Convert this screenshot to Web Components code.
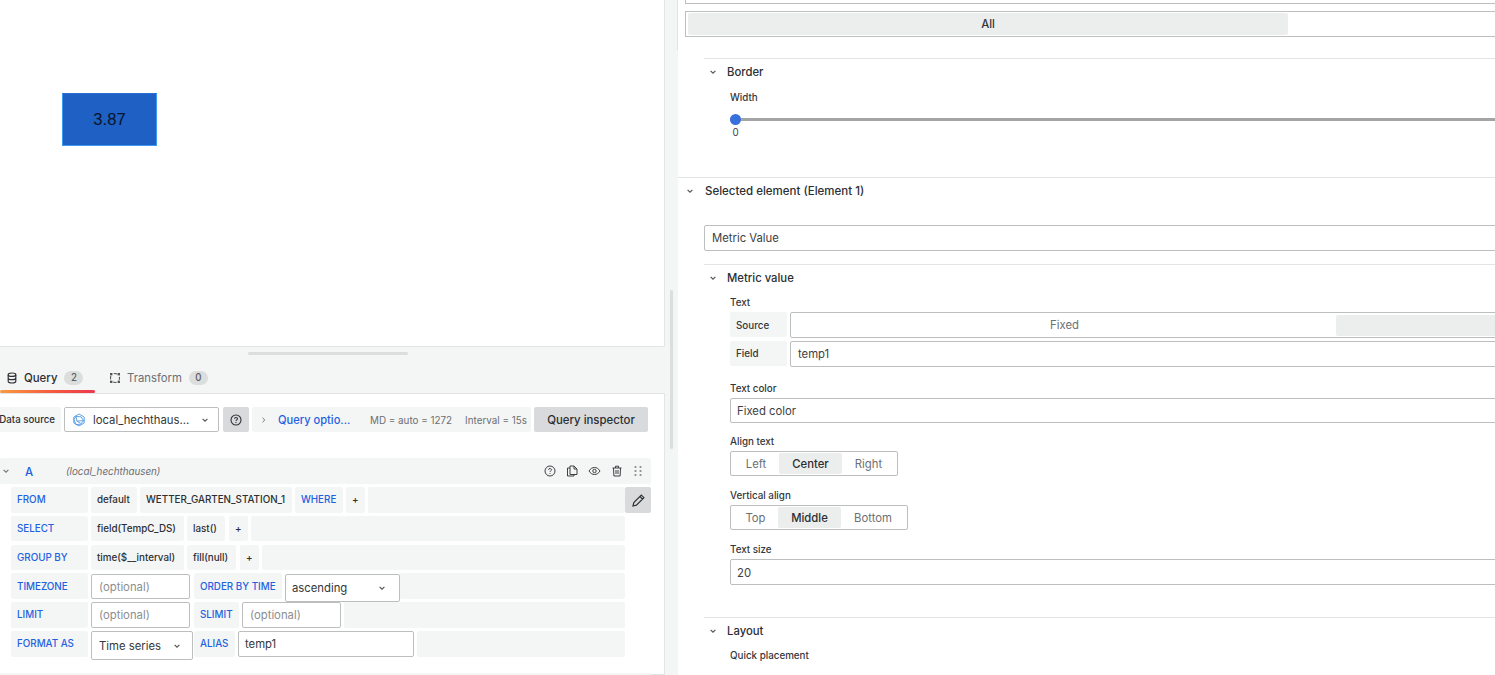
<!DOCTYPE html>
<html><head><meta charset="utf-8">
<style>
html,body{margin:0;height:100%;overflow:hidden;background:#fff;font-family:Inter,"Liberation Sans",sans-serif;color:#24292e}
</style></head><body>
<app-root></app-root>
<script>
function def(name,css,html){
  customElements.define(name,class extends HTMLElement{
    constructor(){super();const s=this.attachShadow({mode:'open'});
      s.innerHTML='<style>'+css+'</style>'+html;}
  });
}
const chev='<svg width="12" height="12" viewBox="0 0 12 12" fill="none" stroke="currentColor" stroke-width="1.2"><path d="M3.6 4.9 6 7.2l2.4-2.3"/></svg>';

def('q-tag',`:host{display:flex;align-items:center;height:var(--h,25px);background:#f4f5f5;border-radius:2px;font-size:9.8px;font-weight:500;color:#2b2f33;padding:0 6px var(--pb,0);white-space:nowrap;box-sizing:border-box;flex:none}
:host([kw]){color:#1f62e0}`,'<slot></slot>');
def('q-fill',`:host{display:block;flex:1;height:var(--h,25px);background:#f4f5f5;border-radius:2px}`,'');
def('q-input',`:host{display:flex;align-items:center;box-sizing:border-box;height:26px;border:1px solid #bdbebf;border-radius:2px;background:#fff;font-size:11.3px;color:#33373b;padding:0 6px;white-space:nowrap;flex:none;justify-content:space-between}
:host([ph]){color:#8b8e91;padding:0 7px}`,`<slot></slot>`);
def('q-row',`:host{display:flex;gap:3px;align-items:flex-start;height:29px}`,'<slot></slot>');

def('ico-help',`:host{display:inline-flex}`,'<svg width="12" height="12" viewBox="0 0 12 12" fill="none" stroke="#2f3236" stroke-width="1.1"><circle cx="6" cy="6" r="5"/><path d="M4.5 4.8C4.6 3.9 5.2 3.5 6 3.5c.9 0 1.5.5 1.5 1.3 0 1.1-1.5 1.1-1.5 2.1"/><path d="M6 8.1v.8"/></svg>');

def('query-editor',`:host{display:block;margin:0 13px 0 0;background:#fff;border:1px solid #e3e4e4;border-left:0;padding:13px 0 0 0;height:100%;box-sizing:border-box;font-size:11px}
.top{display:flex;gap:3px;height:25px;align-items:stretch;padding-right:16px}
.lab{background:#f4f5f5;display:flex;align-items:center;justify-content:flex-end;padding-right:6px;box-sizing:border-box;font-size:9.7px;font-weight:500;color:#2b2f33;width:61px;border-radius:0 2px 2px 0;flex:none;white-space:nowrap;overflow:hidden}
.ds{width:155px;box-sizing:border-box;border:1px solid #bdbebf;border-radius:2px;display:flex;align-items:center;font-size:11.3px;color:#33373b;padding:0 7px 0 7px;flex:none}
.ds span{flex:1;margin-left:7px;white-space:nowrap}
.hb{width:26px;background:#d9dadb;border-radius:2px;display:flex;align-items:center;justify-content:center;flex:none;margin-left:1px}
.opt{flex:1;background:#f4f5f5;display:flex;align-items:center;padding:0 4px 0 8px;border-radius:2px;white-space:nowrap}
.opt b{font-weight:500;font-size:11.1px;color:#1f62e0;margin-left:10px;width:92px;flex:none}
.opt i{font-style:normal;font-size:9.85px;color:#6c6f73;margin-right:13px}
.opt i:last-child{margin-right:0}
.insp{width:114px;flex:none;background:#d9dadb;border-radius:2px;font-weight:500;font-size:11.4px;color:#2b2f33;display:flex;align-items:center;justify-content:center}
.hd{margin-top:26px;height:26px;background:#f4f5f5;display:flex;align-items:center;margin-right:13px;border-radius:2px;color:#666}
.hd .c{width:25px;display:flex}
.hd .a{font-weight:500;font-size:11.5px;color:#1f62e0;width:41px;margin-top:1px}
.hd .n{font-style:italic;font-size:9.8px;color:#6c6f73;flex:1}
.hd svg.i{margin-right:10px}
.rows{margin:3px 0 0 11px;display:block;position:relative}
.pen{position:absolute;left:614px;top:0;width:26px;height:26px;background:#d9dadb;border-radius:2px;display:flex;align-items:center;justify-content:center}
.next{margin-top:13px;height:6px;background:#f4f5f5;margin-right:13px}
`,`
<div class="top">
 <div class="lab">Data source</div>
 <div class="ds"><svg width="14" height="14" viewBox="0 0 14 14" fill="none" stroke="#4f97e3" stroke-width=".9"><path d="M7 1l5.200 3v6L7 13l-5.200-3V4z"/><path d="M4 3.500l5 .3 2.700 3.800-3 3.600-4.700.4L2 6.500zM4 3.500l.9 4.600 3.800 2.300M4.900 8.100l6.800-.5"/></svg><span>local_hechthaus...</span>${chev.replace('<svg','<svg style="color:#555"')}</div>
 <div class="hb"><ico-help></ico-help></div>
 <div class="opt"><svg width="8" height="10" viewBox="0 0 8 10" fill="none" stroke="#777" stroke-width="1"><path d="M2.500 2.800 4.800 5 2.500 7.200"/></svg><b>Query optio...</b><i>MD = auto = 1272</i><i>Interval = 15s</i></div>
 <div class="insp">Query inspector</div>
</div>
<div class="hd"><span class="c">${chev.replace('<svg','<svg style="color:#777"')}</span><span class="a">A</span><span class="n">(local_hechthausen)</span>
 <svg class="i" width="12" height="12" viewBox="0 0 12 12" fill="none" stroke="#3d4044" stroke-width="1"><circle cx="6" cy="6" r="5"/><path d="M4.500 4.800C4.600 3.900 5.200 3.500 6 3.500c.9 0 1.500.5 1.500 1.300 0 1.100-1.500 1.100-1.500 2.100M6 8.100v.8"/></svg>
 <svg class="i" width="12" height="12" viewBox="0 0 12 12" fill="none" stroke="#3d4044" stroke-width="1"><path d="M4 1h4l3 3v5.500H4zM8 1v3h3"/><path d="M4 3H1.500v8H8V9.500" /></svg>
 <svg class="i" width="13" height="12" viewBox="0 0 13 12" fill="none" stroke="#3d4044" stroke-width="1"><path d="M1 6c1.500-2.400 3.300-3.500 5.500-3.500S10.500 3.600 12 6c-1.500 2.400-3.300 3.500-5.500 3.500S2.500 8.400 1 6z"/><circle cx="6.500" cy="6" r="1.700"/></svg>
 <svg class="i" width="12" height="12" viewBox="0 0 12 12" fill="none" stroke="#3d4044" stroke-width="1"><path d="M1.500 3h9M4.500 3V1.200h3V3M2.500 3l.4 8h6.200l.4-8M5 5v4M7 5v4"/></svg>
 <svg class="i" style="margin-right:8px" width="10" height="12" viewBox="0 0 10 12" fill="#888"><circle cx="2.500" cy="2" r="1.100"/><circle cx="7.500" cy="2" r="1.100"/><circle cx="2.500" cy="6" r="1.100"/><circle cx="7.500" cy="6" r="1.100"/><circle cx="2.500" cy="10" r="1.100"/><circle cx="7.500" cy="10" r="1.100"/></svg>
</div>
<div class="rows">
 <div class="pen"><svg width="15" height="15" viewBox="0 0 15 15" fill="none" stroke="#2f3236" stroke-width="1.200"><path d="M2 13l.8-3.400 7.500-7.500 2.600 2.600-7.500 7.500zM8.900 3.500l2.600 2.600"/></svg></div>
 <div style="width:614px"><slot></slot></div>
</div>
<div class="next"></div>
`);

def('side-section',`:host{display:block;border-top:1px solid #e3e4e4}
.h{display:flex;align-items:center;font-size:11.3px;font-weight:500;color:#2b2f33;height:26px}
.c{display:flex;width:18px;margin-right:5px;justify-content:center;color:#555}
:host([top]) .h{font-size:11.5px}
:host([top]) .c{width:24px;margin-right:3px}
`,`<div class="h"><span class="c">${chev}</span><slot name="t"></slot></div><slot></slot>`);

def('f-label',`:host{display:block;font-size:9.8px;font-weight:500;color:#33373b;line-height:12px}`,'<slot></slot>');
def('f-box',`:host{display:flex;align-items:center;box-sizing:border-box;height:26px;border:1px solid #bdbebf;border-radius:2px;font-size:11.3px;color:#3d4044;padding:0 7px 0 6px;background:#fff;width:900px;white-space:nowrap;flex:none}`,'<slot></slot>');
def('f-radio',`:host{display:flex;box-sizing:border-box;height:25px;border:1px solid #bdbebf;border-radius:2px;padding:1px 2px;background:#fff;font-size:11.3px;color:#6c6f73}`,'<slot></slot>');
def('f-opt',`:host{display:flex;align-items:center;justify-content:center;height:100%;box-sizing:border-box;border-radius:2px}
:host([on]){background:#eceded;color:#2b2f33;font-weight:500}`,'<slot></slot>');
def('f-key',`:host{display:flex;align-items:center;box-sizing:border-box;height:25px;width:57px;background:#f4f5f5;border-radius:2px;font-size:9.8px;font-weight:500;color:#33373b;padding:0 6px;flex:none}`,'<slot></slot>');

def('options-panel',`:host{display:block;height:675px;overflow:hidden;background:#fff;font-size:11.3px}
.topline{height:3px;margin:0 0 0 7px;border-bottom:1px solid #bdbebf;border-left:1px solid #bdbebf}
.all{margin:7px 0 0 7px;box-sizing:border-box;height:26px;border:1px solid #bdbebf;border-right:0;padding:1px 2px;width:830px}
.all div{width:600px;height:100%;background:#eceded;border-radius:2px;display:flex;align-items:center;justify-content:center;color:#33373b;font-weight:500;font-size:11.3px}
.track{position:relative;height:3px;background:#a3a4a6;margin-top:14px;width:770px}
.dot{position:absolute;left:0;top:-4px;width:11px;height:11px;border-radius:50%;background:#3871dc}
.zero{font-size:9.8px;color:#3d4044;margin-top:6px;width:11px;text-align:center;line-height:12px}
.row{display:flex;gap:3px}
.sp{display:block;width:547px;box-sizing:border-box;text-align:center;color:#6c6f73;flex:none}
.gr{display:block;height:21px;width:159px;margin-left:-2px;background:#eceded;border-radius:2px 0 0 2px;flex:none}
`,`
<div class="topline"></div>
<div class="all"><div>All</div></div>
<side-section style="margin:21px 0 0 26px"><span slot="t">Border</span>
 <div style="padding-top:7px;margin-left:26px">
  <f-label>Width</f-label>
  <div class="track"><div class="dot"></div></div>
  <div class="zero">0</div>
 </div>
</side-section>
<side-section top style="margin-top:38px"><span slot="t">Selected element (Element 1)</span>
 <div style="margin-left:26px;padding-top:21px">
  <f-box style="padding-left:7px">Metric Value</f-box>
  <side-section style="margin-top:13px"><span slot="t">Metric value</span>
   <div style="margin-left:26px;padding-top:6px">
    <f-label>Text</f-label>
    <div class="row" style="margin-top:3px"><f-key style="padding-top:1px">Source</f-key><f-box style="padding:0"><span class="sp">Fixed</span><span class="gr"></span></f-box></div>
    <div class="row" style="margin-top:3px"><f-key>Field</f-key><f-box style="padding-left:7px">temp1</f-box></div>
    <f-label style="margin-top:15px;padding-top:1px;margin-bottom:3px">Text color</f-label>
    <f-box style="height:25px">Fixed color</f-box>
    <f-label style="margin-top:12px;padding-top:1px;margin-bottom:3px">Align text</f-label>
    <f-radio style="width:168px"><f-opt style="width:46px">Left</f-opt><f-opt on style="width:63px">Center</f-opt><f-opt style="width:53px">Right</f-opt></f-radio>
    <f-label style="margin-top:14px;margin-bottom:3px">Vertical align</f-label>
    <f-radio style="width:178px"><f-opt style="width:45px">Top</f-opt><f-opt on style="width:63px">Middle</f-opt><f-opt style="width:64px">Bottom</f-opt></f-radio>
    <f-label style="margin-top:13px;padding-top:1px;margin-bottom:3px">Text size</f-label>
    <f-box style="padding-top:1px">20</f-box>
   </div>
  </side-section>
  <side-section style="margin-top:32px"><span slot="t">Layout</span>
   <div style="margin-left:26px;padding-top:6px"><f-label>Quick placement</f-label></div>
  </side-section>
 </div>
</side-section>
`);

def('app-root',`:host{display:flex;height:675px;width:1495px;overflow:hidden}
.left{width:678px;flex:none;background:#f4f5f5;position:relative;display:flex;flex-direction:column}
.vis{height:347px;flex:none;box-sizing:border-box;background:#fff;width:665px;border-right:1px solid #e3e4e4;border-bottom:1px solid #e3e4e4;border-radius:0 0 2px 0;padding:93px 0 0 62px}
.metric{width:95px;height:53px;box-sizing:border-box;background:#1f60c4;border:1px solid #3b9bf5;border-top-color:#2a6fd0;display:flex;align-items:center;justify-content:center;font-size:16.600px;font-family:"Liberation Sans",sans-serif;color:#07142b}
.split{margin-left:248px;width:160px;height:3px;margin-top:5px;background:#dcdddd;border-radius:2px;flex:none}
.tabs{display:flex;height:30px;margin-top:8px;align-items:center;flex:none;width:665px;font-size:11.4px;font-weight:500}
.tab{display:flex;align-items:center;height:100%;position:relative;box-sizing:border-box}
.tab.on{color:#2b2f33;width:95px;padding-left:6px}
.tab.on::after{content:"";position:absolute;left:0;right:0;bottom:0;height:3px;border-radius:2px;background:linear-gradient(90deg,#f99b3e,#f55f3e,#f0384f)}
.tab.off{color:#6c6f73;padding-left:14px;font-weight:400;font-size:11.3px}
.tab svg{margin-right:6px}
.badge{margin-left:7px;background:#dcdddd;color:#5c5f63;font-size:9.65px;border-radius:8px;width:19px;text-align:center;height:14px;line-height:14px;font-weight:500}
.q{flex:1;min-height:0}
.sb1{position:absolute;left:670px;top:290px;width:3px;height:159px;background:#dcdddd;border-radius:2px}
.sb2{position:absolute;left:677px;top:0;width:1px;height:50px;background:#e0e1e1}
.right{flex:1;min-width:0;background:#fff}
`,`
<div class="left">
 <div class="vis"><div class="metric">3.87</div></div>
 <div class="split"></div>
 <div class="tabs">
  <div class="tab on"><svg width="12" height="12" viewBox="0 0 12 12" fill="none" stroke="#2f3236" stroke-width="1.200"><ellipse cx="6" cy="2.700" rx="3.800" ry="1.700"/><path d="M2.200 2.700v6.600c0 .9 1.700 1.700 3.800 1.700s3.800-.8 3.800-1.700V2.700M2.200 6c0 .9 1.700 1.700 3.800 1.700S9.800 6.900 9.800 6"/></svg>Query<span class="badge">2</span></div>
  <div class="tab off"><svg width="12" height="12" viewBox="0 0 12 12" fill="none" stroke="#555" stroke-width="1.100"><circle cx="6" cy="6" r="4.500" stroke-dasharray="3.500 3.500" stroke-dashoffset="1.700"/><rect x="1" y="1" width="2.400" height="2.400" fill="#555" stroke="none"/><rect x="8.600" y="1" width="2.400" height="2.400" fill="#555" stroke="none"/><rect x="1" y="8.600" width="2.400" height="2.400" fill="#555" stroke="none"/><rect x="8.600" y="8.600" width="2.400" height="2.400" fill="#555" stroke="none"/></svg>Transform<span class="badge">0</span></div>
 </div>
 <div class="q"><query-editor>
  <q-row style="--h:26px;--pb:1px"><q-tag kw style="width:77px">FROM</q-tag><q-tag style="width:46px">default</q-tag><q-tag style="width:152px">WETTER_GARTEN_STATION_1</q-tag><q-tag kw style="width:48px">WHERE</q-tag><q-tag style="width:19px">+</q-tag><q-fill></q-fill></q-row>
  <q-row><q-tag kw style="width:77px">SELECT</q-tag><q-tag style="width:93px">field(TempC_DS)</q-tag><q-tag style="width:38px">last()</q-tag><q-tag style="width:19px;margin-left:1px">+</q-tag><q-fill></q-fill></q-row>
  <q-row style="height:28px"><q-tag kw style="width:77px">GROUP BY</q-tag><q-tag style="width:93px">time($__interval)</q-tag><q-tag style="width:49px">fill(null)</q-tag><q-tag style="width:19px;margin-left:1px">+</q-tag><q-fill></q-fill></q-row>
  <q-row style="--h:26px"><q-tag kw style="width:77px">TIMEZONE</q-tag><q-input ph style="width:99px;height:25px;margin-top:1px">(optional)</q-input><q-tag kw style="width:88px;margin-left:1px">ORDER BY TIME</q-tag><q-input style="width:115px;height:28px;margin:1px -3px 0 0">ascending<svg style="margin-right:5px" width="12" height="12" viewBox="0 0 12 12" fill="none" stroke="#555" stroke-width="1.2"><path d="M3.6 4.900 6 7.200l2.400-2.300"/></svg></q-input><q-fill></q-fill></q-row>
  <q-row style="--h:26px;--pb:1px"><q-tag kw style="width:77px">LIMIT</q-tag><q-input ph style="width:99px">(optional)</q-input><q-tag kw style="width:45px;margin-left:1px">SLIMIT</q-tag><q-input ph style="width:99px">(optional)</q-input><q-fill></q-fill></q-row>
  <q-row style="--h:26px;--pb:1px"><q-tag kw style="width:77px">FORMAT AS</q-tag><q-input style="width:102px;height:29px;padding:0 7px">Time series<svg style="margin-right:2px" width="12" height="12" viewBox="0 0 12 12" fill="none" stroke="#555" stroke-width="1.2"><path d="M3.6 4.900 6 7.200l2.400-2.300"/></svg></q-input><q-tag kw style="width:41px;margin-left:-2px">ALIAS</q-tag><q-input style="width:176px">temp1</q-input><q-fill></q-fill></q-row>
 </query-editor></div>
 <div class="sb1"></div><div class="sb2"></div>
</div>
<div class="right"><options-panel></options-panel></div>
`);
</script>
</body></html>
